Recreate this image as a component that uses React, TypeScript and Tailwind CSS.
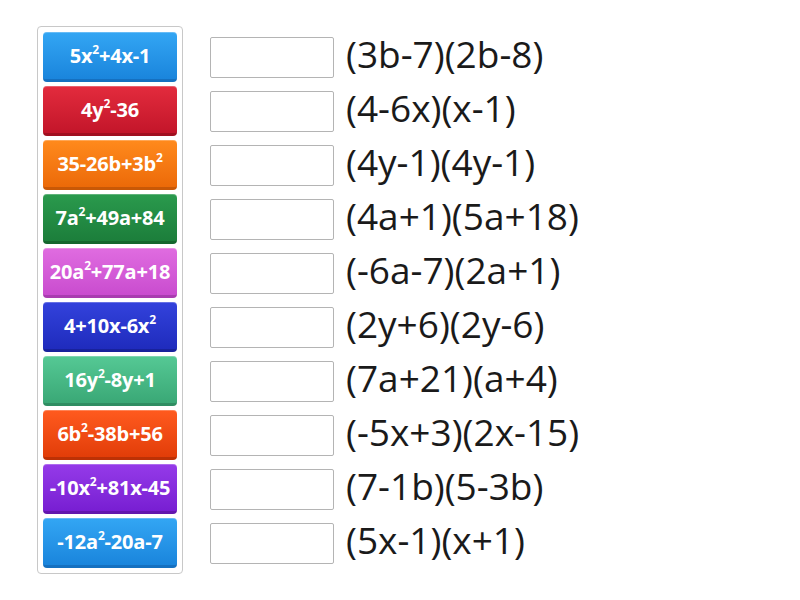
import React from 'react';

type Tile = { parts: (string | { sup: string })[]; bg: string };

const tiles: Tile[] = [
  { parts: ['5x', { sup: '2' }, '+4x-1'], bg: 'bg-gradient-to-b from-[#33a6f4] to-[#1a85dc] border-[#1570c0]' },
  { parts: ['4y', { sup: '2' }, '-36'], bg: 'bg-gradient-to-b from-[#e32b3d] to-[#c3152a] border-[#a10f20]' },
  { parts: ['35-26b+3b', { sup: '2' }], bg: 'bg-gradient-to-b from-[#ff8a1c] to-[#ec6a08] border-[#c95806]' },
  { parts: ['7a', { sup: '2' }, '+49a+84'], bg: 'bg-gradient-to-b from-[#2a9a4d] to-[#1c7e3b] border-[#15662e]' },
  { parts: ['20a', { sup: '2' }, '+77a+18'], bg: 'bg-gradient-to-b from-[#e06ce0] to-[#c94ccf] border-[#a93cb0]' },
  { parts: ['4+10x-6x', { sup: '2' }], bg: 'bg-gradient-to-b from-[#3342dc] to-[#1f2bbd] border-[#18229c]' },
  { parts: ['16y', { sup: '2' }, '-8y+1'], bg: 'bg-gradient-to-b from-[#55c995] to-[#3aa876] border-[#2f8d62]' },
  { parts: ['6b', { sup: '2' }, '-38b+56'], bg: 'bg-gradient-to-b from-[#ff5a1e] to-[#e23d08] border-[#bd3105]' },
  { parts: ['-10x', { sup: '2' }, '+81x-45'], bg: 'bg-gradient-to-b from-[#953ae9] to-[#781ed2] border-[#6217ae]' },
  { parts: ['-12a', { sup: '2' }, '-20a-7'], bg: 'bg-gradient-to-b from-[#33a6f4] to-[#1a85dc] border-[#1570c0]' },
];

const answers = [
  '(3b-7)(2b-8)',
  '(4-6x)(x-1)',
  '(4y-1)(4y-1)',
  '(4a+1)(5a+18)',
  '(-6a-7)(2a+1)',
  '(2y+6)(2y-6)',
  '(7a+21)(a+4)',
  '(-5x+3)(2x-15)',
  '(7-1b)(5-3b)',
  '(5x-1)(x+1)',
];

export default function App() {
  return (
    <div className="w-[800px] h-[600px] bg-white font-['Open_Sans',sans-serif] pl-[37px] pt-[26px] flex gap-[27px]">
      <div className="w-[146px] border border-[#c8c8c8] rounded-[4px] p-[5px] flex flex-col gap-[4px] self-start">
        {tiles.map((t, i) => (
          <div
            key={i}
            className={`h-[50px] rounded-[4px] border-b-[3px] flex items-center justify-center text-white font-bold text-[20px] tracking-[-0.2px] shadow-[inset_0_1px_0_rgba(255,255,255,0.25)] ${t.bg}`}
          >
            <span className="leading-none whitespace-nowrap">
              {t.parts.map((p, j) =>
                typeof p === 'string' ? (
                  <span key={j}>{p}</span>
                ) : (
                  <sup key={j} className="text-[12px] -top-[0.7em]">{p.sup}</sup>
                )
              )}
            </span>
          </div>
        ))}
      </div>
      <div className="flex flex-col pt-[4px]">
        {answers.map((a, i) => (
          <div key={i} className="h-[54px] flex items-center gap-[12px]">
            <div className="w-[124px] h-[41px] border border-[#b4b4b4] rounded-[2px] bg-white" />
            <span className="text-[37px] leading-none pb-[8px] text-[#1a1a1a] whitespace-nowrap">{a}</span>
          </div>
        ))}
      </div>
    </div>
  );
}
